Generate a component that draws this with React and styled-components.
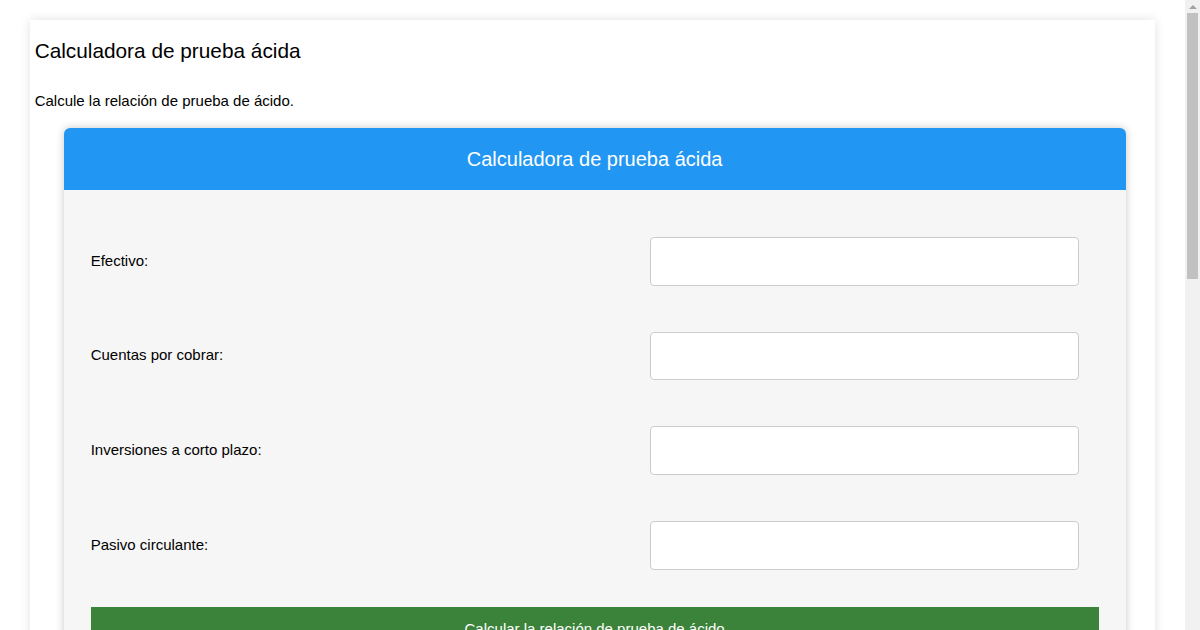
import React from "react";
import styled, { createGlobalStyle } from "styled-components";

const Global = createGlobalStyle`
  html, body { margin: 0; padding: 0; background: #fff; }
  body { font-family: "Liberation Sans", Arial, sans-serif; color: #000; padding-right: 15px; }
  * { box-sizing: border-box; }
`;

const Scrollbar = styled.div`
  position: fixed;
  top: 0;
  right: 0;
  width: 15px;
  height: 100vh;
  background: #f1f1f1;
  display: flex;
  flex-direction: column;
  align-items: center;
`;

const Arrow = styled.div`
  width: 0;
  height: 0;
  margin: 5px 0 4px;
  border-left: 4px solid transparent;
  border-right: 4px solid transparent;
  border-bottom: 4px solid #a3a3a3;
`;

const Thumb = styled.div`
  width: 11px;
  height: 266px;
  background: #c1c1c1;
`;

const Page = styled.div`
  width: 95%;
  margin: 20px auto 40px;
  padding: 5px 5px 30px;
  background: #fff;
  box-shadow: 0 0 10px rgba(0, 0, 0, 0.12);
`;

const Heading = styled.h1`
  font-size: 20.8px;
  font-weight: normal;
  margin: 14px 0 0;
  line-height: 24px;
`;

const Intro = styled.p`
  font-size: 15px;
  margin: 29px 0 18px;
  line-height: 18px;
`;

const Card = styled.div`
  width: 1062px;
  margin-left: 29px;
  border-radius: 6px 6px 0 0;
  background: #f6f6f6;
  box-shadow: 0 0 8px rgba(0, 0, 0, 0.22);
  overflow: hidden;
`;

const CardHeader = styled.div`
  height: 62px;
  background: #2196f3;
  color: #fff;
  font-size: 20px;
  display: flex;
  align-items: center;
  justify-content: center;
`;

const CardBody = styled.div`
  padding: 24px 27px 40px;
`;

const Row = styled.div`
  display: grid;
  grid-template-columns: 559px 429px;
  align-items: center;
  padding: 23px 0;
`;

const Label = styled.label`
  font-size: 15px;
  padding-bottom: 2px;
`;

const Input = styled.input`
  height: 48.67px;
  width: 100%;
  border: 1px solid #ccc;
  border-radius: 4px;
  background: #fff;
  font-size: 15px;
  padding: 0 12px;
`;

const Button = styled.button`
  display: block;
  width: 100%;
  margin-top: 14px;
  height: 44px;
  border: none;
  background: #3b833a;
  color: #fff;
  font-family: inherit;
  font-size: 15px;
  padding: 0;
  line-height: 44px;
`;

const fields = [
  "Efectivo:",
  "Cuentas por cobrar:",
  "Inversiones a corto plazo:",
  "Pasivo circulante:",
];

export default function App() {
  return (
    <>
      <Global />
      <Page>
        <Heading>Calculadora de prueba ácida</Heading>
        <Intro>Calcule la relación de prueba de ácido.</Intro>
        <Card>
          <CardHeader>Calculadora de prueba ácida</CardHeader>
          <CardBody>
            {fields.map((f) => (
              <Row key={f}>
                <Label>{f}</Label>
                <Input type="text" />
              </Row>
            ))}
            <Button>Calcular la relación de prueba de ácido</Button>
          </CardBody>
        </Card>
      </Page>
      <Scrollbar>
        <Arrow />
        <Thumb />
      </Scrollbar>
    </>
  );
}
